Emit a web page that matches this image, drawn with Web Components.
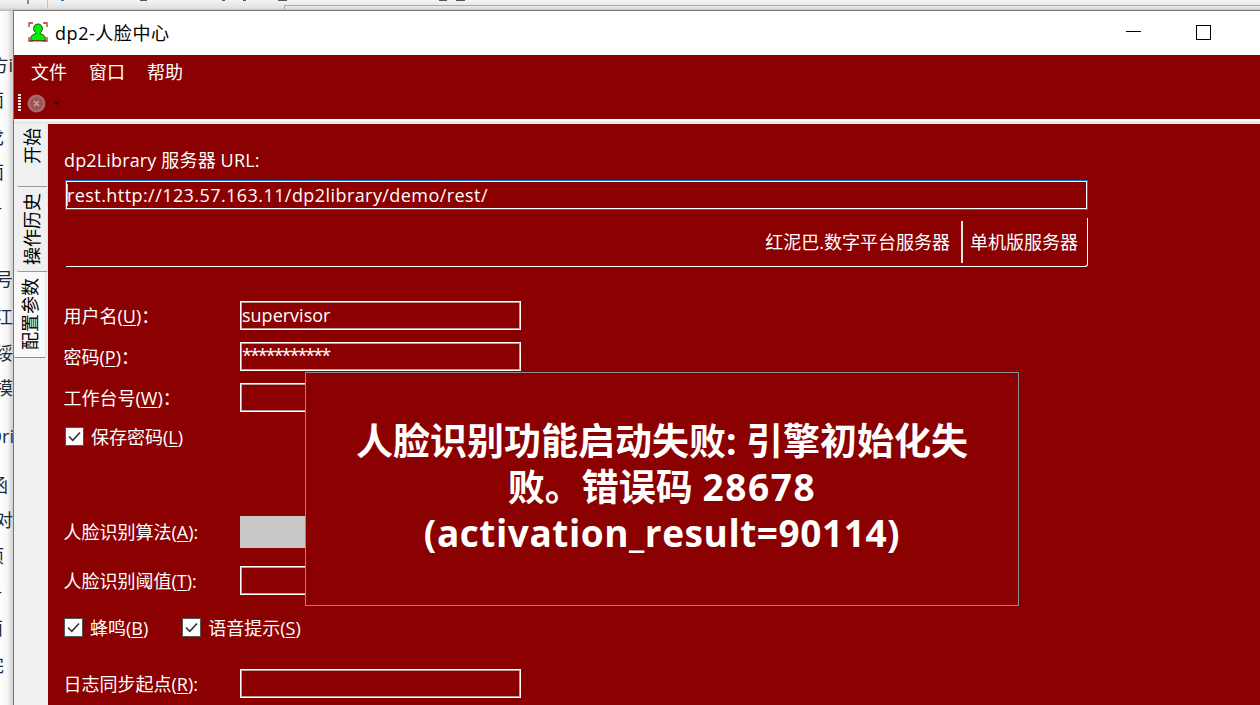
<!DOCTYPE html>
<html lang="zh">
<head>
<meta charset="utf-8">
<title>dp2-人脸中心</title>
<style>
  html, body { margin: 0; height: 100%; overflow: hidden; background: #fff; }
  body { font: 18px "Open Sans", "Noto Sans CJK SC", sans-serif; }
  .latin { letter-spacing: .55px; }
  .code { letter-spacing: 1.6px; }
</style>
</head>
<body>
<dp-desktop>
  <dp-window>
    <dp-config-panel slot="panel"></dp-config-panel>
    <dp-toast slot="panel">人脸识别功能启动失败: 引擎初始化失败。错误码 <span class="code">28678</span> <span class="latin">(activation_result=90114)</span></dp-toast>
  </dp-window>
</dp-desktop>

<script>
// whatever is peeking out from behind the app window: text, top, right offset
const behindLeft = [
  ["方i", 54, 1247], ["面", 89, 1256], ["戈", 126, 1256], ["面", 161, 1256], ["-", 196, 1258],
  ["号", 268, 1247], ["江", 306, 1247], ["绥", 342, 1247], ["摸", 377, 1247], ["Ori", 425, 1246],
  ["函", 474, 1252], ["对", 509, 1247], ["项", 545, 1256], ["-", 580, 1258], ["面", 617, 1257], ["完", 654, 1256],
];

class DpDesktop extends HTMLElement {
  constructor() {
    super();
    const shadow = this.attachShadow({ mode: "open" });
    const peeks = behindLeft
      .map(([t, y, r]) => `<span class="peek" style="top:${y}px;right:${r}px">${t}</span>`)
      .join("");
    shadow.innerHTML = `
      <style>
        :host { display: block; position: relative; width: 1260px; height: 705px; overflow: hidden;
          background: linear-gradient(90deg, #fff 0, #f7f7f7 7px, #cfcfcf 13px); }
        .top { position: absolute; left: 0; top: 0; right: 0; height: 11px;
          background: linear-gradient(180deg, #f4f4f4 0, #e2e2e2 8px, #b5b5b5 11px); }
        .top i { position: absolute; display: block; background: #8a8a8a; }
        .top b { position: absolute; top: -1px; height: 2px; background: #555; }
        .peek { position: absolute; white-space: nowrap; color: #1c2a3a;
          font: 18px/22px "Open Sans", "Noto Sans CJK SC", sans-serif; }
        .win { position: absolute; left: 13px; top: 10px; width: 1400px; height: 800px; }
      </style>
      <div class="top">
        <i style="left:27px;top:0;width:2px;height:4px"></i>
        <i style="left:47px;top:0;width:1px;height:9px;background:#c4c4c4"></i>
        <i style="left:284px;top:5px;width:976px;height:1px;background:#aaa"></i>
        <i style="left:284px;top:5px;width:1px;height:6px;background:#aaa"></i>
        <b style="left:61px;width:3px;background:#1a7bd0"></b>
        <b style="left:140px;width:7px"></b>
        <b style="left:222px;width:3px"></b><b style="left:243px;width:3px"></b>
        <b style="left:278px;width:9px"></b>
        <b style="left:439px;width:8px"></b><b style="left:456px;width:9px"></b>
      </div>
      ${peeks}
      <div class="win"><slot></slot></div>
    `;
  }
}

const windowTemplate = document.createElement("template");
windowTemplate.innerHTML = `
  <style>
    :host { display: flex; flex-direction: column; width: 100%; height: 100%; box-sizing: border-box;
      border: 1px solid #777; border-width: 1px 0 0 1px; background: #8b0000; color: #fff; }
    .title { flex: 0 0 44px; box-sizing: border-box; display: flex; align-items: center; background: #fff; color: #000;
      padding: 0 0 2px 14px; }
    .title svg { width: 20px; height: 20px; margin-right: 7px; }
    .title span { letter-spacing: .55px; }
    .min { position: absolute; left: 1113px; top: 21px; width: 15px; height: 1px; background: #000; }
    .max { position: absolute; left: 1183px; top: 15px; width: 13px; height: 13px; border: 1px solid #000; }
    .menu { flex: 0 0 34px; display: flex; gap: 22px; align-items: center; padding: 0 0 0 17px; line-height: 24px; }
    .tools { flex: 0 0 30px; box-sizing: border-box; display: flex; align-items: center; padding: 0 0 2px 4px; }
    .grip { width: 3px; height: 18px; margin-right: 7px;
      background: repeating-linear-gradient(180deg, #f0e2e2 0 2px, transparent 2px 3px); }
    .caret { width: 0; height: 0; margin-left: 8px; border: 3px solid transparent; border-top: 3px solid #2a0000; border-bottom: 0; }
    .rule { flex: 0 0 5px; background: linear-gradient(180deg, #fff 0 2px, #e9e9e9 2px); }
    .body { flex: 1; display: flex; min-height: 0; }
    .tabs { flex: 0 0 34px; display: flex; flex-direction: column; background: #f0f0f0; color: #000; }
    .tab { box-sizing: border-box; writing-mode: vertical-rl; text-orientation: sideways; transform: rotate(180deg);
      display: flex; align-items: center; justify-content: center; width: 31px; margin-left: 3px; line-height: 31px;
      border-top: 1px solid #9a9a9a; border-left: 1px solid #e4e4e4; border-radius: 0 2px 2px 0; }
    .tab.on { width: 32px; line-height: 32px; background: #f9f9f9; margin-left: 0; border-top-color: #8d8d8d; }
    .work { flex: 1; position: relative; display: block; min-width: 0; overflow: hidden; }
  </style>
  <div class="title">
    <svg viewBox="0 0 20 20" aria-hidden="true">
      <path d="M1 5V1h4M15 1h4v4M19 15v4h-4M5 19H1v-4" fill="none" stroke="#b3312a" stroke-width="1.3"/>
      <path d="M10 2c2.800 0 4.400 2.100 4.400 4.600 0 1.800-.8 3.200-2 4.100v1.100c2.700.4 4.500 1.800 4.800 4.200v2.500H2.800V16c.3-2.400 2.100-3.800 4.800-4.200v-1.100c-1.200-.9-2-2.300-2-4.100C5.600 4.100 7.200 2 10 2z"
        fill="#00f000" stroke="#2e4a20" stroke-width="1"/>
      <path d="M3 19h14" stroke="#b3312a" stroke-width="1"/>
    </svg>
    <span>dp2-人脸中心</span>
    <div class="min"></div><div class="max"></div>
  </div>
  <div class="menu"><span>文件</span><span>窗口</span><span>帮助</span></div>
  <div class="tools">
    <div class="grip"></div>
    <svg width="19" height="19" viewBox="0 0 19 19" aria-hidden="true" style="margin-left:-1px">
      <circle cx="9.500" cy="9.500" r="9" fill="#a86a6a"/>
      <circle cx="9.500" cy="9.500" r="6.500" fill="#9c5656"/>
      <path d="M7 7l5 5M12 7l-5 5" stroke="#c9a4a4" stroke-width="1.500"/>
    </svg>
    <div class="caret"></div>
  </div>
  <div class="rule"></div>
  <div class="body">
    <div class="tabs">
      <div class="tab" style="height:63px;padding-top:18px">开始</div>
      <div class="tab" style="height:84px;margin-top:1px">操作历史</div>
      <div class="tab on" style="height:86px">配置参数</div>
    </div>
    <div class="work"><slot name="panel"></slot></div>
  </div>
`;

class DpWindow extends HTMLElement {
  constructor() {
    super();
    this.attachShadow({ mode: "open" }).append(windowTemplate.content.cloneNode(true));
  }
}

class DpTextField extends HTMLElement {
  constructor() {
    super();
    this.attachShadow({ mode: "open" }).innerHTML = `
      <style>
        :host { display: block; box-sizing: border-box; width: 281px; height: 29px; flex: none;
          border: 1px solid #fff; outline: 1px solid #b9a0a0; outline-offset: -2px; padding: 0 1px;
          line-height: 27px; white-space: nowrap; overflow: hidden; }
        :host([pw]) { line-height: 24px; letter-spacing: -2px; }
        :host([disabled]) { height: 32px; background: #c8c8c8; border-color: #c8c8c8; outline: none; }
      </style>
      <slot></slot>
    `;
  }
}

class DpCheck extends HTMLElement {
  constructor() {
    super();
    this.attachShadow({ mode: "open" }).innerHTML = `
      <style>
        :host { display: inline-flex; align-items: center; height: 19px; line-height: 24px; }
        .box { box-sizing: border-box; width: 19px; height: 19px; margin-right: 7px; background: #fff;
          border: 1px solid #555; display: flex; align-items: center; justify-content: center; }
      </style>
      <span class="box">
        <svg width="13" height="11" viewBox="0 0 13 11" aria-hidden="true">
          <path d="M1 5.500l3.800 3.800L12 1.500" fill="none" stroke="#333" stroke-width="1.600"/>
        </svg>
      </span>
      <slot></slot>
    `;
  }
}

const panelTemplate = document.createElement("template");
panelTemplate.innerHTML = `
  <style>
    :host { display: block; padding: 24px 0 0 16px; height: 100%; box-sizing: border-box; background: #8b0000; color: #fff; }
    .cap { line-height: 24px; letter-spacing: .15px; }
    .url { box-sizing: border-box; width: 1023px; height: 30px; margin: 8px 0 0 1px; padding: 0 1px;
      border: 1px solid #0078d7; box-shadow: inset 0 0 0 1px #fff; line-height: 28px; position: relative;
      white-space: nowrap; letter-spacing: .43px; }
    .url i { position: absolute; left: 1px; top: 3px; width: 1px; height: 22px; background: #8fd8ff; }
    .servers { box-sizing: border-box; width: 1022px; height: 49px; margin: 8px 0 0 2px;
      display: flex; justify-content: flex-end; align-items: center; line-height: 24px;
      border: 1px solid #fff; border-width: 0 1px 1px 0; border-radius: 0 0 3px 0; padding-right: 9px; }
    .servers .sep { width: 2px; height: 42px; background: #f0e0e0; margin: 0 7px 0 11px; }
    .row { display: flex; align-items: center; }
    .row > label { flex: 0 0 176.500px; margin-left: -.5px; line-height: 24px; white-space: nowrap; }
    u { text-underline-offset: 2px; }
    .account { margin-top: 34px; display: flex; flex-direction: column; gap: 12px; }
    .save { margin: 15px 0 0 1px; line-height: 0; }
    .algo { margin-top: 70px; }
    .thresh { margin-top: 18px; }
    .checks { margin-top: 23px; display: flex; }
    .checks dp-check + dp-check { margin-left: 34px; }
    .log { margin-top: 32px; }
  </style>
  <div class="cap">dp2Library 服务器 URL:</div>
  <div class="url"><i></i>rest.http://123.57.163.11/dp2library/demo/rest/</div>
  <div class="servers"><span>红泥巴.数字平台服务器</span><span class="sep"></span><span>单机版服务器</span></div>
  <div class="account">
    <div class="row"><label>用户名(<u>U</u>)：</label><dp-text-field>supervisor</dp-text-field></div>
    <div class="row"><label>密码(<u>P</u>)：</label><dp-text-field pw>***********</dp-text-field></div>
    <div class="row"><label>工作台号(<u>W</u>)：</label><dp-text-field></dp-text-field></div>
  </div>
  <div class="save"><dp-check>保存密码(<u>L</u>)</dp-check></div>
  <div class="row algo"><label>人脸识别算法(<u>A</u>):</label><dp-text-field disabled></dp-text-field></div>
  <div class="row thresh"><label>人脸识别阈值(<u>T</u>):</label><dp-text-field></dp-text-field></div>
  <div class="checks"><dp-check>蜂鸣(<u>B</u>)</dp-check><dp-check>语音提示(<u>S</u>)</dp-check></div>
  <div class="row log"><label>日志同步起点(<u>R</u>):</label><dp-text-field></dp-text-field></div>
`;

class DpConfigPanel extends HTMLElement {
  constructor() {
    super();
    this.attachShadow({ mode: "open" }).append(panelTemplate.content.cloneNode(true));
  }
}

class DpToast extends HTMLElement {
  constructor() {
    super();
    this.attachShadow({ mode: "open" }).innerHTML = `
      <style>
        :host { position: absolute; left: 257px; top: 248px; width: 714px; height: 234px; box-sizing: border-box;
          display: flex; align-items: center; justify-content: center; padding: 0 40px 4px;
          background: #8b0000; border: 1px solid #8f8f8f; color: #fff; text-align: center;
          font: bold 37px/46px "Open Sans", "Noto Sans CJK SC", sans-serif; }
      </style>
      <div><slot></slot></div>
    `;
  }
}

customElements.define("dp-desktop", DpDesktop);
customElements.define("dp-window", DpWindow);
customElements.define("dp-text-field", DpTextField);
customElements.define("dp-check", DpCheck);
customElements.define("dp-config-panel", DpConfigPanel);
customElements.define("dp-toast", DpToast);
</script>
</body>
</html>
